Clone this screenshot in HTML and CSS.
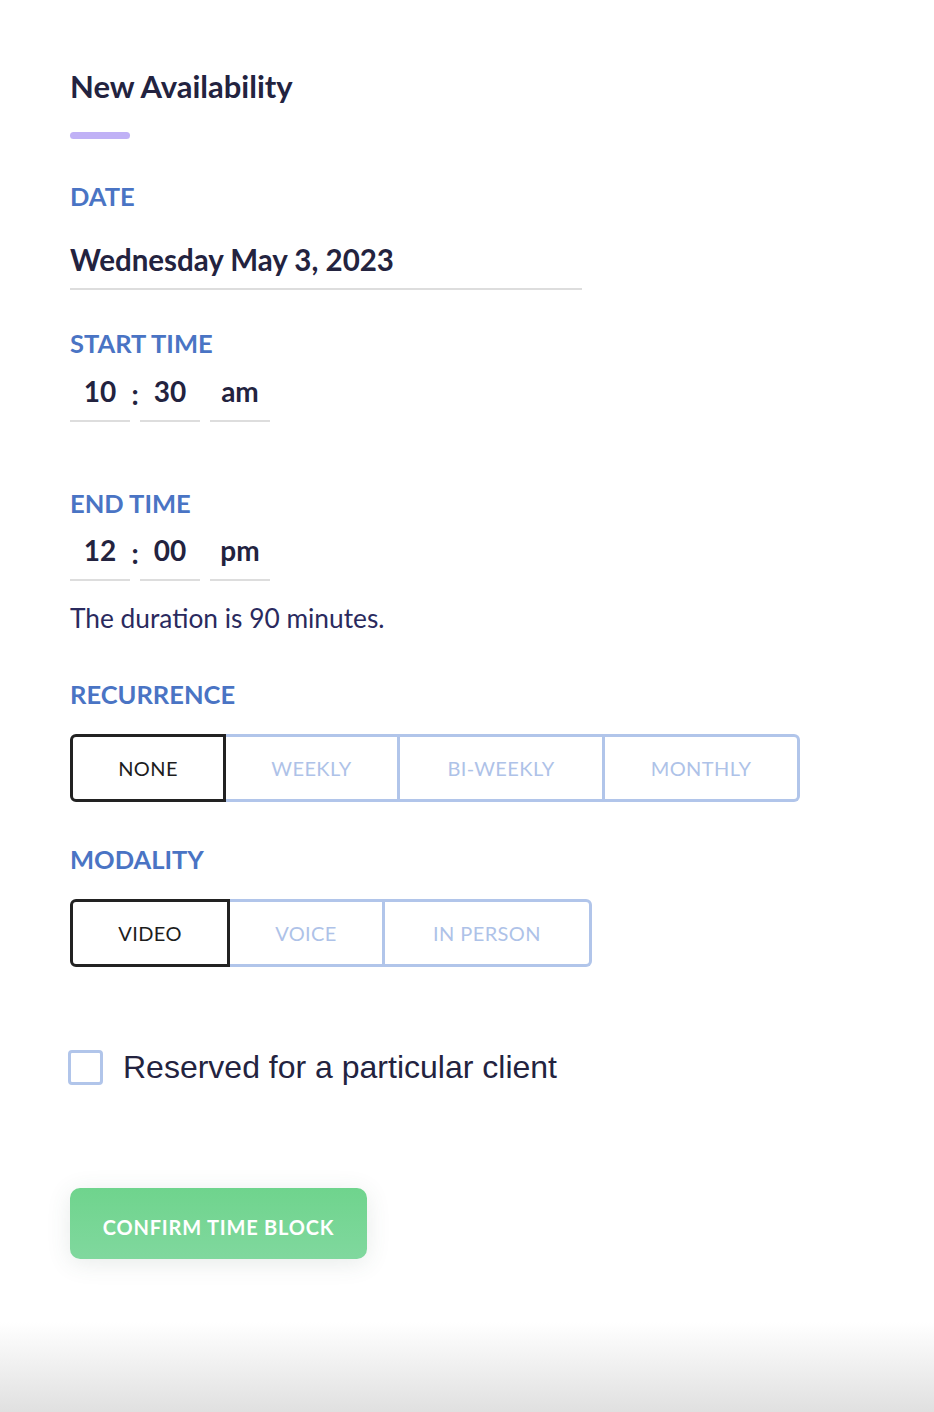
FILE: index.html
```html
<!DOCTYPE html>
<html lang="en">
<head>
    <meta charset="UTF-8">
    <meta name="viewport" content="width=device-width, initial-scale=1.0">
    <title>New Availability</title>
    <link rel="stylesheet" href="styles.css">
</head>
<body>
    <div class="panel">
        <h1 class="title">New Availability</h1>
        <div class="title-bar"></div>

        <!-- Date -->
        <div class="label label-date">DATE</div>
        <div class="date-value">Wednesday May 3, 2023</div>

        <!-- Start time -->
        <div class="label label-start">START TIME</div>
        <div class="time-row">
            <div class="time-field">10</div>
            <div class="time-sep">:</div>
            <div class="time-field">30</div>
            <div class="time-sep"></div>
            <div class="time-field">am</div>
        </div>

        <!-- End time -->
        <div class="label label-end">END TIME</div>
        <div class="time-row time-row-end">
            <div class="time-field">12</div>
            <div class="time-sep">:</div>
            <div class="time-field">00</div>
            <div class="time-sep"></div>
            <div class="time-field">pm</div>
        </div>

        <p class="duration">The duration is 90 minutes.</p>

        <!-- Recurrence -->
        <div class="label label-recurrence">RECURRENCE</div>
        <div class="segments">
            <button class="segment active seg-none">NONE</button>
            <button class="segment seg-weekly">WEEKLY</button>
            <button class="segment seg-biweekly">BI-WEEKLY</button>
            <button class="segment seg-monthly">MONTHLY</button>
        </div>

        <!-- Modality -->
        <div class="label label-modality">MODALITY</div>
        <div class="segments">
            <button class="segment active seg-video">VIDEO</button>
            <button class="segment seg-voice">VOICE</button>
            <button class="segment seg-person">IN PERSON</button>
        </div>

        <label class="reserved">
            <span class="checkbox"></span>
            <span class="reserved-text">Reserved for a particular client</span>
        </label>

        <button class="confirm">CONFIRM TIME BLOCK</button>
    </div>
    <div class="bottom-fade"></div>
</body>
</html>
```

FILE: styles.css
```css
* {
    margin: 0;
    padding: 0;
    box-sizing: border-box;
}

body {
    background: #ffffff;
    font-family: Lato, "Noto Sans", sans-serif;
    color: #23233f;
    min-height: 1412px;
    position: relative;
}

.panel {
    padding: 66px 0 0 70px;
}

.title {
    font-size: 31px;
    line-height: 40px;
    font-weight: 700;
    color: #23233f;
}

.title-bar {
    margin-top: 26px;
    width: 60px;
    height: 7px;
    border-radius: 4px;
    background: #c0b1f6;
}

.label {
    font-size: 25.5px;
    line-height: 30px;
    font-weight: 700;
    color: #4a74c4;
}

.label-date { margin-top: 42px; }
.label-start { margin-top: 38px; }
.label-end { margin-top: 66px; }
.label-recurrence { margin-top: 46px; }
.label-modality { margin-top: 42px; }

.date-value {
    margin-top: 29px;
    width: 512px;
    font-size: 29.5px;
    line-height: 40px;
    font-weight: 700;
    padding-bottom: 8px;
    border-bottom: 2px solid #dddddd;
}

.time-row {
    margin-top: 13px;
    display: grid;
    grid-template-columns: 60px 10px 60px 10px 60px;
    align-items: start;
}

.time-row-end {
    margin-top: 12px;
}

.time-field {
    font-size: 28px;
    line-height: 40px;
    font-weight: 700;
    text-align: center;
    padding-bottom: 9px;
    border-bottom: 2px solid #dddddd;
}

.time-sep {
    font-size: 28px;
    line-height: 40px;
    font-weight: 700;
    text-align: center;
    padding-top: 3px;
}

.duration {
    margin-top: 22px;
    font-size: 26.3px;
    line-height: 30px;
    color: #2a2a5e;
}

.segments {
    margin-top: 25px;
    display: flex;
}

.segment {
    height: 68px;
    background: #ffffff;
    border: 3px solid #b1c5ea;
    border-left-width: 0;
    font-family: Lato, "Noto Sans", sans-serif;
    font-size: 20px;
    letter-spacing: 0.02em;
    color: #aec2e8;
    cursor: pointer;
}

.segment:last-child {
    border-radius: 0 6px 6px 0;
}

.segment.active {
    border: 3px solid #222222;
    border-radius: 6px 0 0 6px;
    color: #1d1d1d;
}

.seg-none { width: 156px; }
.seg-weekly { width: 174px; }
.seg-biweekly { width: 205px; }
.seg-monthly { width: 195px; }
.seg-video { width: 160px; }
.seg-voice { width: 155px; }
.seg-person { width: 207px; }

.reserved {
    margin-top: 83px;
    margin-left: -2px;
    display: flex;
    align-items: center;
    gap: 20px;
    cursor: pointer;
}

.checkbox {
    width: 35px;
    height: 35px;
    border: 3px solid #b1c5ea;
    border-radius: 4px;
}

.reserved-text {
    font-family: "Liberation Sans", Arial, sans-serif;
    font-size: 32px;
    line-height: 35px;
    color: #23233f;
}

.confirm {
    margin-top: 103px;
    width: 297px;
    height: 71px;
    padding-top: 6px;
    border: none;
    border-radius: 10px;
    background: linear-gradient(to bottom, #6fd48d, #80d89e);
    box-shadow: 0 4px 24px rgba(60, 90, 70, 0.12);
    color: #ffffff;
    font-family: Lato, "Noto Sans", sans-serif;
    font-size: 20px;
    font-weight: 700;
    letter-spacing: 0.04em;
    cursor: pointer;
}

.bottom-fade {
    position: absolute;
    left: 0;
    right: 0;
    bottom: 0;
    height: 90px;
    background: linear-gradient(to bottom, rgba(224, 224, 224, 0), #e0e0e0);
}
```
